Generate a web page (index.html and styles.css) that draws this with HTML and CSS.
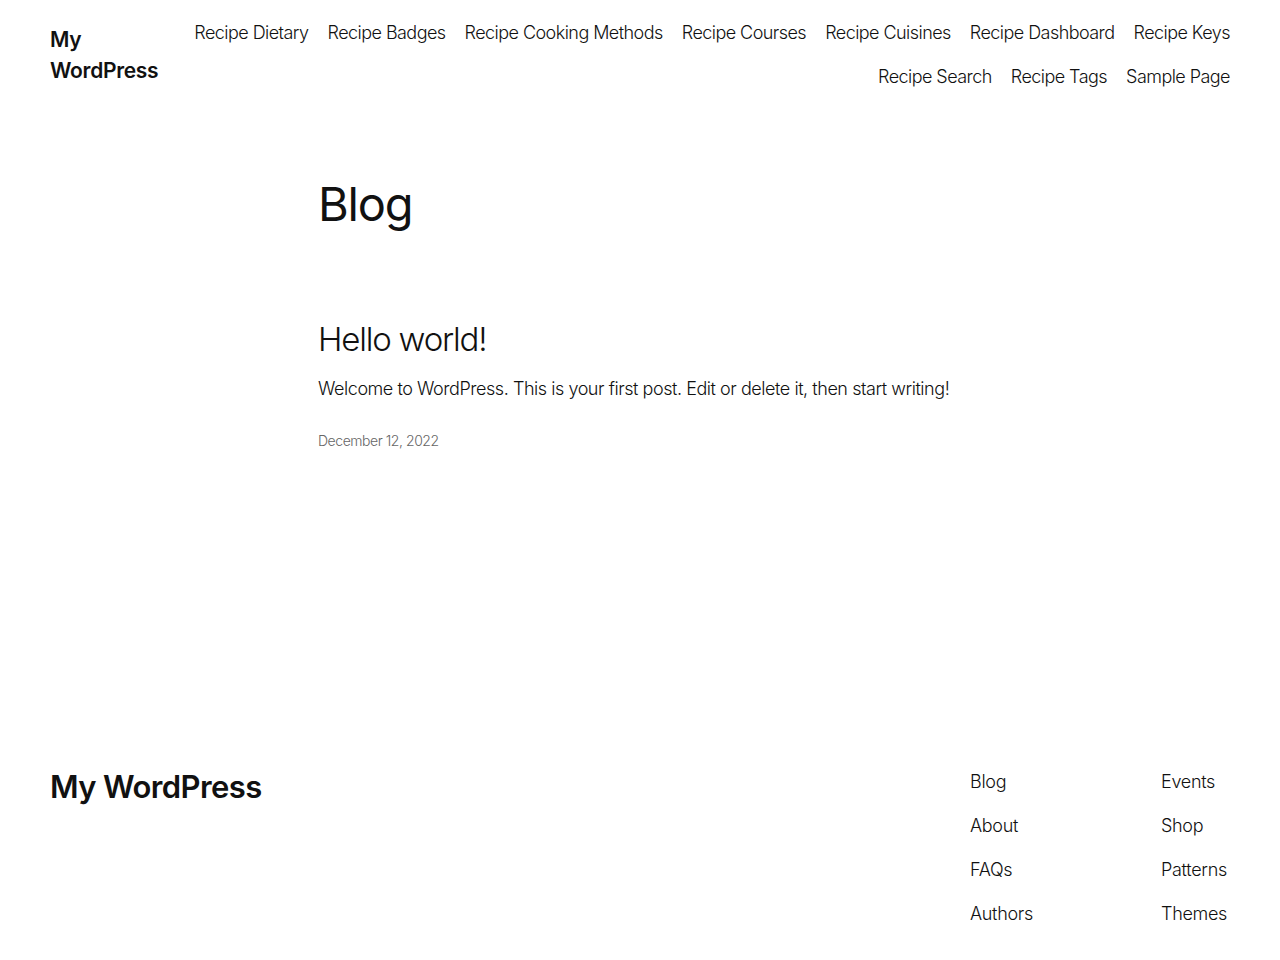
FILE: index.html
```html
<!DOCTYPE html>
<html lang="en">
<head>
<meta charset="utf-8">
<title>Blog – My WordPress</title>
<link rel="stylesheet" href="styles.css">
</head>
<body>
<div class="page">
  <header class="site-header">
    <div class="site-title">My WordPress</div>
    <nav class="main-nav">
      <a href="#">Recipe Dietary</a>
      <a href="#">Recipe Badges</a>
      <a href="#">Recipe Cooking Methods</a>
      <a href="#">Recipe Courses</a>
      <a href="#">Recipe Cuisines</a>
      <a href="#">Recipe Dashboard</a>
      <a href="#">Recipe Keys</a>
      <a href="#">Recipe Search</a>
      <a href="#">Recipe Tags</a>
      <a href="#">Sample Page</a>
    </nav>
  </header>

  <main class="content">
    <h1 class="page-title">Blog</h1>
    <article class="post">
      <h2 class="post-title">Hello world!</h2>
      <p class="excerpt">Welcome to WordPress. This is your first post. Edit or delete it, then start writing!</p>
      <div class="post-date">December 12, 2022</div>
    </article>
  </main>

  <footer class="site-footer">
    <div class="footer-title">My WordPress</div>
    <div class="footer-nav">
      <ul class="footer-col">
        <li><a href="#">Blog</a></li>
        <li><a href="#">About</a></li>
        <li><a href="#">FAQs</a></li>
        <li><a href="#">Authors</a></li>
      </ul>
      <ul class="footer-col">
        <li><a href="#">Events</a></li>
        <li><a href="#">Shop</a></li>
        <li><a href="#">Patterns</a></li>
        <li><a href="#">Themes</a></li>
      </ul>
    </div>
  </footer>
</div>
</body>
</html>
```

FILE: styles.css
```css
* { box-sizing: border-box; }
html, body { margin: 0; padding: 0; background: #fff; }
body {
  font-family: Inter, "Noto Sans", "Liberation Sans", sans-serif;
  color: #111;
  font-weight: 300;
  -webkit-font-smoothing: antialiased;
}
a { color: #111; text-decoration: none; }

.page {
  width: 1280px;
  height: 960px;
  display: flex;
  flex-direction: column;
}

.site-header {
  display: flex;
  justify-content: space-between;
  align-items: flex-start;
  padding: 19px 50px 0 50px;
  gap: 10px;
}
.site-title {
  font-size: 21px;
  font-weight: 600;
  line-height: 31px;
  width: 112px;
  flex: none;
  margin-top: 5px;
  letter-spacing: -0.3px;
}
.main-nav {
  flex: 1;
  display: flex;
  flex-wrap: wrap;
  justify-content: flex-end;
  column-gap: 19px;
  row-gap: 17px;
  font-size: 18px;
  line-height: 27px;
  letter-spacing: -0.55px;
}

.content {
  width: 644px;
  margin: 0 auto;
  padding-top: 86px;
  flex: 1;
}
.page-title {
  font-size: 47px;
  font-weight: 400;
  line-height: 1.2;
  margin: 0;
  letter-spacing: -1.2px;
}
.post { margin-top: 88px; }
.post-title {
  font-size: 33px;
  font-weight: 300;
  line-height: 1.2;
  margin: 0;
  letter-spacing: -1.2px;
}
.excerpt {
  font-size: 18px;
  line-height: 1.6;
  margin: 15px 0 0 0;
  letter-spacing: -0.45px;
}
.post-date {
  font-size: 14px;
  color: #666;
  margin-top: 28px;
  letter-spacing: -0.45px;
}

.site-footer {
  display: flex;
  justify-content: space-between;
  align-items: flex-start;
  padding: 0 50px 33px 50px;
}
.footer-title {
  font-size: 31px;
  font-weight: 600;
  line-height: 1.2;
  letter-spacing: -0.6px;
  margin-top: 0;
}
.footer-nav {
  display: flex;
  gap: 0;
}
.footer-col {
  list-style: none;
  margin: 0;
  padding: 0;
  display: flex;
  flex-direction: column;
  gap: 17px;
  font-size: 18px;
  line-height: 27px;
  letter-spacing: -0.3px;
}
.footer-col:first-child { width: 191px; }
.footer-col:last-child { min-width: 69px; }
```
